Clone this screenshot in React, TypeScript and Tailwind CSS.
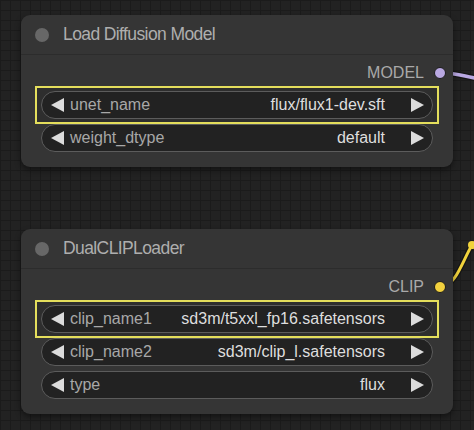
import React from 'react';

type Widget = { label: string; value: string; selected?: boolean };

const LeftArrow = () => (
  <svg width="13" height="14" viewBox="0 0 13 14" className="shrink-0">
    <polygon points="13,0 13,14 0,7" fill="#dcdcdc" />
  </svg>
);

const RightArrow = () => (
  <svg width="13" height="14" viewBox="0 0 13 14" className="shrink-0">
    <polygon points="0,0 0,14 13,7" fill="#dcdcdc" />
  </svg>
);

const ComboWidget: React.FC<Widget> = ({ label, value, selected }) => {
  const pill = (
    <div className="h-7 flex items-center rounded-full bg-[#222222] border border-[#5c5c5c] pl-[9px] pr-[8px] text-[16px]">
      <LeftArrow />
      <span className="ml-[6px] text-[#a8a8a8] whitespace-nowrap">{label}</span>
      <span className="flex-1 text-right text-[#dedede] whitespace-nowrap pl-4">{value}</span>
      <span className="ml-[26px]">
        <RightArrow />
      </span>
    </div>
  );

  if (!selected) return pill;

  // selected widget gets the square yellow highlight box
  return (
    <div className="-mx-[6px] -my-[5px] px-[4px] py-[3px] border-2 border-[#e4de5c] bg-[#2e2e2e]">
      {pill}
    </div>
  );
};

const Node: React.FC<{
  title: string;
  output: string;
  outputColor: string;
  widgets: Widget[];
  className?: string;
}> = ({ title, output, outputColor, widgets, className }) => (
  <div className={`relative w-[432px] rounded-[9px] bg-[#353535] shadow-[0_3px_6px_rgba(0,0,0,0.45)] ${className ?? ''}`}>
    {/* Title bar */}
    <div className="h-10 flex items-center border-b border-[#2c2c2c] pl-[14px]">
      <span className="w-[14px] h-[14px] rounded-full bg-[#676767]" />
      <span className="ml-[14px] text-[17.5px] tracking-[-0.6px] text-[#aeaeae]">{title}</span>
    </div>

    {/* Body */}
    <div className="pt-2 pb-[15px] px-5">
      <div className="h-5 flex items-center justify-end -mr-[13px]">
        <span className="text-[16px] text-[#a9a9a9] leading-none">{output}</span>
        <span
          className="ml-[10px] w-[12px] h-[12px] rounded-full border border-[#1c1c1c]"
          style={{ backgroundColor: outputColor }}
        />
      </div>
      <div className="mt-2 flex flex-col gap-[5px]">
        {widgets.map(w => (
          <ComboWidget key={w.label} {...w} />
        ))}
      </div>
    </div>
  </div>
);

const App: React.FC = () => {
  return (
    <div
      className="relative w-[474px] h-[430px] overflow-hidden bg-[#222222] bg-[linear-gradient(#1b1b1b_1px,transparent_1px),linear-gradient(90deg,#1b1b1b_1px,transparent_1px)] bg-[size:10px_10px] pt-[15px] pl-[21px]"
      style={{ fontFamily: '"Liberation Sans", Arial, sans-serif' }}
    >
      {/* Links leaving the output slots */}
      <svg className="absolute inset-0 pointer-events-none" width="474" height="430">
        <path d="M441 73 C 458 73, 462 76, 480 79" stroke="#151515" strokeWidth="6" fill="none" />
        <path d="M441 73 C 458 73, 462 76, 480 79" stroke="#b9a8e2" strokeWidth="3.5" fill="none" />
        <path d="M441 288 C 456 285, 462 262, 472 245" stroke="#151515" strokeWidth="5.5" fill="none" />
        <path d="M441 288 C 456 285, 462 262, 472 245" stroke="#f0d23c" strokeWidth="3" fill="none" />
        <circle cx="472" cy="245" r="4" fill="#f0d23c" />
      </svg>

      <Node
        title="Load Diffusion Model"
        output="MODEL"
        outputColor="#b9a8e2"
        widgets={[
          { label: 'unet_name', value: 'flux/flux1-dev.sft', selected: true },
          { label: 'weight_dtype', value: 'default' },
        ]}
      />

      <Node
        className="mt-[62px]"
        title="DualCLIPLoader"
        output="CLIP"
        outputColor="#f2d13e"
        widgets={[
          { label: 'clip_name1', value: 'sd3m/t5xxl_fp16.safetensors', selected: true },
          { label: 'clip_name2', value: 'sd3m/clip_l.safetensors' },
          { label: 'type', value: 'flux' },
        ]}
      />
    </div>
  );
};

export default App;
